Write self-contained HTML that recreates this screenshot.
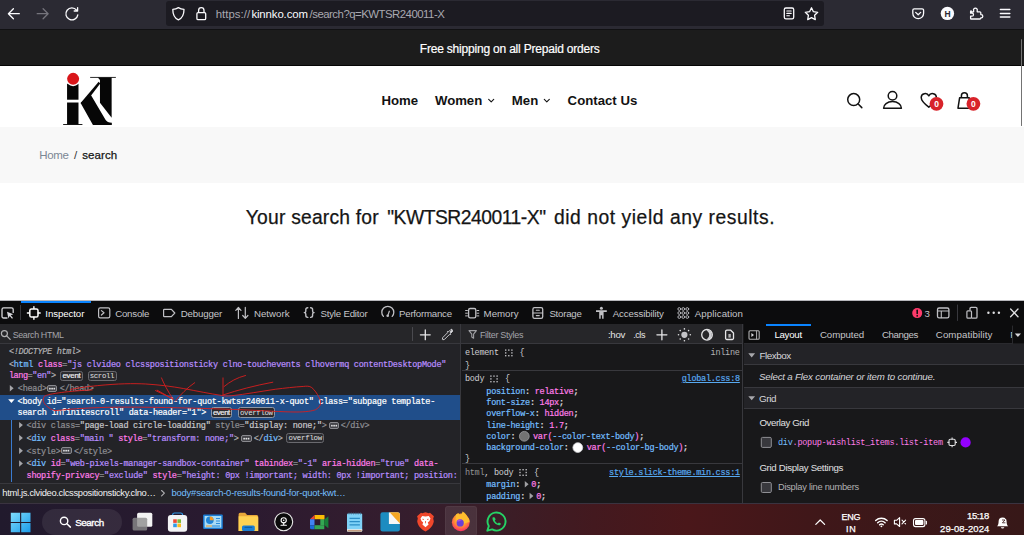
<!DOCTYPE html>
<html lang="en">
<head>
<meta charset="utf-8">
<title>kinnko search</title>
<style>
*{box-sizing:border-box;margin:0;padding:0}
html,body{width:1024px;height:535px;overflow:hidden;background:#fff}
body{position:relative;font-family:"Liberation Sans",sans-serif}
.a{position:absolute}
.t{position:absolute;white-space:nowrap;line-height:1}
svg{position:absolute;overflow:visible}
.eq{color:#8f8f94}.tag{color:#75bfff}.an{color:#ff7de9}.av{color:#b98eff}.pn{color:#75bfff}.pv{color:#ff7de9}.g{color:#939395}
</style>
</head>
<body>

<!-- ===== Browser toolbar ===== -->
<div class="a" style="left:0;top:0;width:1024px;height:29px;background:#2b2a33"></div>
<div class="a" style="left:166px;top:1px;width:658px;height:25px;background:#1c1b22;border-radius:3px"></div>
<svg style="left:0;top:0" width="1024" height="29" viewBox="0 0 1024 29" fill="none" stroke-linecap="round" stroke-linejoin="round">
<g stroke="#fbfbfe" stroke-width="1.3">
<path d="M19.3 13.7H8.6M13.4 8.7l-5 5 5 5"/>
<path d="M76.6 10.2a6 6 0 1 0 1.2 4.6M77.6 7.6v3.4h-3.4" />
</g>
<g stroke="#75747c" stroke-width="1.3"><path d="M37.2 13.7h10.7M43.1 8.7l5 5-5 5"/></g>
<!-- shield -->
<path d="M178.4 7.6c-1.8 1.2-3.6 1.7-5.6 1.8 0 5.2 1.6 8.6 5.6 10.4 4-1.8 5.6-5.2 5.6-10.4-2-.1-3.8-.6-5.6-1.8z" stroke="#fbfbfe" stroke-width="1.3"/>
<!-- lock -->
<rect x="196.9" y="12.6" width="8.8" height="7" rx="1.2" stroke="#fbfbfe" stroke-width="1.3"/>
<path d="M198.6 12.4v-2a2.7 2.7 0 0 1 5.4 0v2" stroke="#fbfbfe" stroke-width="1.3"/>
<!-- reader -->
<rect x="784.3" y="8" width="9.4" height="10.8" rx="1.6" stroke="#fbfbfe" stroke-width="1.3"/>
<path d="M786.8 11h4.4M786.8 13.4h4.4M786.8 15.8h2.6" stroke="#fbfbfe" stroke-width="1.1"/>
<!-- star -->
<path d="M811.5 7.8l1.9 3.9 4.3.6-3.1 3 .7 4.3-3.8-2-3.8 2 .7-4.3-3.1-3 4.3-.6z" stroke="#fbfbfe" stroke-width="1.3"/>
<!-- pocket -->
<path d="M914.2 8.9h8a1.4 1.4 0 0 1 1.4 1.4v3a5.4 5.4 0 0 1-10.8 0v-3a1.4 1.4 0 0 1 1.4-1.4z" stroke="#fbfbfe" stroke-width="1.3"/>
<path d="M915.7 12.4l2.5 2.4 2.5-2.4" stroke="#fbfbfe" stroke-width="1.3"/>
<!-- avatar -->
<circle cx="947.4" cy="13.4" r="6.7" fill="#fbfbfe" stroke="none"/>
<!-- extensions (puzzle) -->
<path d="M971.2 12.4h2.4v-1.2a1.9 1.9 0 1 1 3.6 0v1.2h2.6a1 1 0 0 1 1 1v1.8h.4a1.6 1.6 0 1 1 0 3.2h-.4v.2a1 1 0 0 1-1 1h-8.600a.6.6 0 0 1-.6-.6v-2.200h1.4a1.500 1.500 0 1 0 0-3h-1.400v-1.800a.6.6 0 0 1 .6-.6z" stroke="#fbfbfe" stroke-width="1.3" transform="translate(0,-0.6)"/>
<!-- hamburger -->
<path d="M1000.400 9.500h9.400M1000.400 13.400h9.400M1000.400 17h9.400" stroke="#fbfbfe" stroke-width="1.500"/>
</svg>
<div class="t" id="t0" style="left:215.70px;top:9.00px;font-size:11.4px;color:#a9a8b0;letter-spacing:0.042px;">https://<span class="t" id="t1" style="left:35.70px;top:0;color:#fbfbfe;letter-spacing:-0.114px;">kinnko.com</span><span class="t" id="t2" style="left:93.90px;top:0;color:#a9a8b0;letter-spacing:-0.507px;">/search?q=KWTSR240011-X</span></div>
<div class="t" id="t3" style="left:944.40px;top:10.01px;font-size:8.5px;color:#2b2a33;font-weight:bold;">H</div>
<!-- ===== Site ===== -->
<div class="a" style="left:0;top:29px;width:1024px;height:37px;background:#1c1c1c;border-top:1px solid #111113;border-bottom:1.400px solid #050505"></div>
<div class="t" id="t4" style="left:419.80px;top:43.00px;font-size:12px;color:#fff;letter-spacing:-0.199px;-webkit-text-stroke:0.2px;">Free shipping on all Prepaid orders</div>
<div class="a" style="left:0;top:66px;width:1024px;height:61px;background:#fff"></div>
<svg style="left:0;top:66px" width="1024" height="61" viewBox="0 66 1024 61">
<path d="M67.06 83.69 L78.49 83.69 L78.49 99.71 L67.06 99.71Z" fill="#060606"/>
<path d="M67.06 102.51 L78.49 102.51 L78.49 124.47 L67.06 124.47Z" fill="#060606"/>
<path d="M63.14 124.02 L82.41 124.02 L82.41 124.92 L63.14 124.92Z" fill="#060606"/>
<path d="M90.15 76.93 L115.85 76.93 L115.85 77.78 L90.15 77.78Z" fill="#060606"/>
<path d="M97.81 77.59 L111.64 77.59 L111.64 117.78 L99.96 102.82 L99.96 79.93Z" fill="#060606"/>
<path d="M98.65 81.79 L100.24 83.38 L91.08 95.44 L81.36 103.66 L80.62 103.10Z" fill="#060606"/>
<path d="M80.62 103.10 L90.90 95.07 L105.66 119.93 Q107.16 122.45 111.83 122.64 L111.83 124.88 L92.95 124.88 Z" fill="#060606"/>
<circle cx="73.11" cy="78.87" r="7.300" fill="#fff"/>
<circle cx="73.11" cy="78.87" r="6" fill="#d9161a"/>
</svg>
<div class="t" id="t5" style="left:381.50px;top:94.01px;font-size:13.2px;color:#121212;font-weight:bold;letter-spacing:-0.047px;">Home</div>
<div class="t" id="t6" style="left:435.00px;top:94.01px;font-size:13.2px;color:#121212;font-weight:bold;letter-spacing:-0.048px;">Women</div>
<div class="t" id="t7" style="left:511.80px;top:94.01px;font-size:13.2px;color:#121212;font-weight:bold;letter-spacing:0.062px;">Men</div>
<div class="t" id="t8" style="left:567.60px;top:94.01px;font-size:13.2px;color:#121212;font-weight:bold;letter-spacing:0.010px;">Contact Us</div>
<svg style="left:0;top:66px" width="1024" height="61" viewBox="0 66 1024 61" fill="none" stroke="#121212" stroke-linecap="round" stroke-linejoin="round">
<path d="M488.700 99.400l2.500 2.400 2.500-2.400M544.300 99.400l2.500 2.400 2.500-2.400" stroke-width="1.100"/>
<g stroke-width="1.500">
<circle cx="853.700" cy="99.600" r="6"/><path d="M858.200 104l3.600 3.600"/>
<circle cx="892.500" cy="95.800" r="4.300"/><path d="M883.600 108.200c0-3.600 3.600-6.600 8.900-6.600s8.900 3 8.900 6.600z"/>
<path d="M928.800 107.200c-4.800-3.600-7.600-6.400-7.600-9.600a4 4 0 0 1 7.600-1.800 4 4 0 0 1 7.600 1.800c0 3.200-2.800 6-7.600 9.600z"/>
<path d="M959.600 97.800h9.600l1.200 10.400h-12.400z M961.400 97.600v-1.800a3 3 0 0 1 6 0v1.800"/>
</g>
<circle cx="936.500" cy="103.800" r="6.900" fill="#d8232a" stroke="none"/>
<circle cx="973.400" cy="103.800" r="6.900" fill="#d8232a" stroke="none"/>
</svg>
<div class="t" id="t9" style="left:934.20px;top:100.01px;font-size:8.5px;color:#fff;font-weight:bold;">0</div>
<div class="t" id="t10" style="left:971.10px;top:100.01px;font-size:8.5px;color:#fff;font-weight:bold;">0</div>
<div class="a" style="left:0;top:127px;width:1024px;height:55.500px;background:#f8f8f8"></div>
<div class="t" id="t11" style="left:39.30px;top:150.00px;font-size:11.5px;color:#7b8794;letter-spacing:-0.329px;">Home</div>
<div class="t" id="t12" style="left:74.10px;top:150.00px;font-size:11.5px;color:#333;">/</div>
<div class="t" id="t13" style="left:82.30px;top:150.00px;font-size:11.5px;color:#161616;letter-spacing:0.054px;-webkit-text-stroke:0.25px #161616;">search</div>
<div class="a" style="left:0;top:182.500px;width:1024px;height:118px;background:#fff"></div>
<div class="t" id="t14" style="left:245.80px;top:208.00px;font-size:19.3px;color:#151515;letter-spacing:0.204px;-webkit-text-stroke:0.25px;">Your search for <span class="t" id="t15" style="left:141.40px;top:0;color:#151515;letter-spacing:-0.479px;-webkit-text-stroke:0.25px;">"KWTSR240011-X" </span><span class="t" id="t16" style="left:308.20px;top:0;color:#151515;letter-spacing:0.546px;-webkit-text-stroke:0.25px;">did not yield any results.</span></div>
<div class="a" style="left:1020.700px;top:39.400px;width:1.400px;height:86.800px;background:#737373;border-radius:1px"></div>
<!-- ===== DevTools ===== -->
<div class="a" style="left:0;top:300px;width:1024px;height:203px;background:#232327"></div>
<div class="a" style="left:0;top:300px;width:1024px;height:1px;background:#b8b8bc"></div>
<div class="a" style="left:0;top:301px;width:1024px;height:22.600px;background:#0c0c0d"></div>
<div class="a" style="left:21px;top:301px;width:70px;height:2px;background:#0a84ff"></div>
<div class="a" style="left:20px;top:305px;width:1px;height:15px;background:#38383d"></div>
<div class="a" style="left:0;top:324px;width:742px;height:20px;background:#262629;border-bottom:1px solid #38383d"></div>
<div class="a" style="left:461px;top:344px;width:281px;height:159px;background:#18181a"></div>
<div class="a" style="left:460px;top:324px;width:1.300px;height:179px;background:#38383d"></div>
<div class="a" style="left:742px;top:324px;width:282px;height:179px;background:#18181a"></div>
<div class="a" style="left:742px;top:324px;width:1.300px;height:179px;background:#38383d"></div>
<div class="a" style="left:743.500px;top:324px;width:281px;height:20px;background:#0c0c0d;border-bottom:1px solid #2a2a2e"></div>
<div class="a" style="left:765.500px;top:324px;width:45.500px;height:1.500px;background:#0a84ff"></div>
<div class="a" style="left:743.500px;top:344px;width:281px;height:20.500px;background:#232327;border-bottom:1px solid #38383d"></div>
<div class="a" style="left:743.500px;top:386.600px;width:281px;height:22.300px;background:#232327;border-top:1px solid #38383d;border-bottom:1px solid #38383d"></div>
<div class="t" id="t17" style="left:45.30px;top:309.00px;font-size:9.7px;color:#fff;letter-spacing:-0.095px;">Inspector</div>
<div class="t" id="t18" style="left:115.20px;top:309.00px;font-size:9.7px;color:#c6c6ca;letter-spacing:-0.224px;">Console</div>
<div class="t" id="t19" style="left:180.70px;top:309.00px;font-size:9.7px;color:#c6c6ca;letter-spacing:-0.152px;">Debugger</div>
<div class="t" id="t20" style="left:253.90px;top:309.00px;font-size:9.7px;color:#c6c6ca;letter-spacing:0.028px;">Network</div>
<div class="t" id="t21" style="left:320.50px;top:309.00px;font-size:9.7px;color:#c6c6ca;letter-spacing:-0.213px;">Style Editor</div>
<div class="t" id="t22" style="left:399.00px;top:309.00px;font-size:9.7px;color:#c6c6ca;letter-spacing:-0.237px;">Performance</div>
<div class="t" id="t23" style="left:483.60px;top:309.00px;font-size:9.7px;color:#c6c6ca;">Memory</div>
<div class="t" id="t24" style="left:549.40px;top:309.00px;font-size:9.7px;color:#c6c6ca;letter-spacing:-0.240px;">Storage</div>
<div class="t" id="t25" style="left:612.70px;top:309.00px;font-size:9.7px;color:#c6c6ca;letter-spacing:-0.130px;">Accessibility</div>
<div class="t" id="t26" style="left:694.80px;top:309.00px;font-size:9.7px;color:#c6c6ca;letter-spacing:0.079px;">Application</div>
<div class="t" id="t27" style="left:924.40px;top:309.00px;font-size:9.7px;color:#c6c6ca;">3</div>
<div class="t" id="t28" style="left:12.70px;top:331.00px;font-size:8.9px;color:#a4a4a9;letter-spacing:-0.345px;">Search HTML</div>
<div class="t" id="t29" style="left:479.90px;top:331.01px;font-size:9px;color:#a4a4a9;letter-spacing:-0.293px;">Filter Styles</div>
<div class="t" id="t30" style="left:607.90px;top:330.01px;font-size:9.7px;color:#e6e6e8;letter-spacing:-0.271px;">:hov</div>
<div class="t" id="t31" style="left:633.20px;top:331.01px;font-size:9px;color:#e6e6e8;letter-spacing:-0.433px;">.cls</div>
<div class="t" id="t32" style="left:774.40px;top:330.00px;font-size:9.7px;color:#fff;letter-spacing:-0.279px;">Layout</div>
<div class="t" id="t33" style="left:819.90px;top:330.00px;font-size:9.7px;color:#c6c6ca;letter-spacing:-0.058px;">Computed</div>
<div class="t" id="t34" style="left:882.00px;top:330.00px;font-size:9.7px;color:#c6c6ca;letter-spacing:-0.414px;">Changes</div>
<div class="t" id="t35" style="left:935.80px;top:330.00px;font-size:9.7px;color:#c6c6ca;letter-spacing:0.096px;">Compatibility</div>
<div class="t" id="t36" style="left:1010.20px;top:330.00px;font-size:9.7px;color:#c6c6ca;">F</div>
<div class="t" id="t37" style="left:759.40px;top:351.01px;font-size:9.9px;color:#d7d7db;letter-spacing:-0.446px;">Flexbox</div>
<div class="t" id="t38" style="left:758.90px;top:372.00px;font-size:9.7px;color:#d7d7db;font-style:italic;letter-spacing:-0.163px;">Select a Flex container or item to continue.</div>
<div class="t" id="t39" style="left:758.90px;top:394.01px;font-size:9.9px;color:#d7d7db;letter-spacing:-0.319px;">Grid</div>
<div class="t" id="t40" style="left:759.40px;top:418.00px;font-size:9.7px;color:#e0e0e2;letter-spacing:-0.407px;">Overlay Grid</div>
<div class="t" id="t41" style="left:759.40px;top:463.01px;font-size:9.7px;color:#e0e0e2;letter-spacing:-0.323px;">Grid Display Settings</div>
<div class="t" id="t42" style="left:778.00px;top:483.01px;font-size:9.3px;color:#b1b1b3;letter-spacing:-0.268px;">Display line numbers</div>
<div class="t" id="t43" style="left:778.00px;top:439.01px;font-size:8.5px;color:#fff;font-family:'Liberation Mono',monospace;letter-spacing:-0.256px;"><span class="tag">div</span><span class="an">.popup-wishlist_items.list-item</span></div>
<svg style="left:742px;top:344px" width="282" height="159" viewBox="742 344 282 159" fill="none">
<path d="M748.300 353.300h6.800l-3.400 4.100z M748.300 396.200h6.800l-3.400 4.100z" fill="#a8a8ac"/>
<rect x="761.300" y="437.400" width="10" height="10" rx="1.200" fill="#38383d" stroke="#8f8f94" stroke-width="1"/>
<rect x="761.300" y="482.500" width="10" height="10" rx="1.200" fill="#38383d" stroke="#8f8f94" stroke-width="1"/>
<circle cx="965.600" cy="442.400" r="5.100" fill="#9400ff"/>
<g stroke="#e0e0e2" stroke-width="1.100"><rect x="949" y="439.300" width="6.200" height="6.200" rx="1.200"/><path d="M952.100 437.500v2M952.100 445.300v2M947.300 442.400h2M955 442.400h2"/></g>
</svg>
<div class="a" style="left:0;top:395.300px;width:460px;height:24.300px;background:#204e8a"></div>
<div class="a" style="left:11px;top:419.500px;width:0.900px;height:62.500px;background:#3a7bd0"></div>
<div class="t" id="t44" style="left:8.90px;top:348.02px;font-size:8.5px;color:#b1b1b3;font-family:'Liberation Mono',monospace;font-style:italic;letter-spacing:-0.323px;-webkit-text-stroke:0.2px;">&lt;!DOCTYPE html&gt;</div>
<div class="t" id="t45" style="left:8.90px;top:361.02px;font-size:8.5px;color:#b1b1b3;font-family:'Liberation Mono',monospace;letter-spacing:-0.242px;-webkit-text-stroke:0.2px;">&lt;<span class="tag">html</span> <span class="an">class</span><span class="eq">=</span><span class="av">"js clvideo clcsspositionsticky clno-touchevents clhovermq contentDesktopMode"</span></div>
<div class="t" id="t46" style="left:8.90px;top:372.02px;font-size:8.5px;color:#b1b1b3;font-family:'Liberation Mono',monospace;letter-spacing:-0.426px;-webkit-text-stroke:0.2px;"><span class="an">lang</span><span class="eq">=</span><span class="av">"en"</span>&gt;</div>
<div class="t" id="t47" style="left:17.80px;top:385.02px;font-size:8.5px;color:#8f8f94;font-family:'Liberation Mono',monospace;letter-spacing:-0.260px;-webkit-text-stroke:0.2px;">&lt;head&gt;</div>
<div class="t" id="t48" style="left:59.80px;top:385.02px;font-size:8.5px;color:#8f8f94;font-family:'Liberation Mono',monospace;letter-spacing:-0.260px;-webkit-text-stroke:0.2px;">&lt;/head&gt;</div>
<div class="t" id="t49" style="left:17.60px;top:398.01px;font-size:8.5px;color:#fff;font-family:'Liberation Mono',monospace;letter-spacing:-0.247px;-webkit-text-stroke:0.2px;">&lt;body id="search-0-results-found-for-quot-kwtsr240011-x-quot" class="subpage template-</div>
<div class="t" id="t50" style="left:17.60px;top:409.02px;font-size:8.5px;color:#fff;font-family:'Liberation Mono',monospace;letter-spacing:-0.267px;-webkit-text-stroke:0.2px;">search infinitescroll" data-header="1"&gt;</div>
<div class="t" id="t51" style="left:26.60px;top:422.01px;font-size:8.5px;color:#8f8f94;font-family:'Liberation Mono',monospace;letter-spacing:-0.263px;-webkit-text-stroke:0.2px;"><span style="color:#8f8f94">&lt;div</span> <span style="color:#8f8f94">class</span><span class="eq">=</span><span style="color:#c8c8cc">"page-load circle-loadding"</span> <span style="color:#8f8f94">style</span><span class="eq">=</span><span style="color:#c8c8cc">"display: none;"</span><span style="color:#8f8f94">&gt;</span></div>
<div class="t" id="t52" style="left:340.70px;top:422.01px;font-size:8.5px;color:#8f8f94;font-family:'Liberation Mono',monospace;letter-spacing:-0.362px;-webkit-text-stroke:0.2px;">&lt;/div&gt;</div>
<div class="t" id="t53" style="left:26.60px;top:435.01px;font-size:8.5px;color:#b1b1b3;font-family:'Liberation Mono',monospace;letter-spacing:-0.285px;-webkit-text-stroke:0.2px;">&lt;<span class="tag">div</span> <span class="an">class</span><span class="eq">=</span><span class="av">"main "</span> <span class="an">style</span><span class="eq">=</span><span class="av">"transform: none;"</span>&gt;</div>
<div class="t" id="t54" style="left:253.80px;top:435.01px;font-size:8.5px;color:#b1b1b3;font-family:'Liberation Mono',monospace;letter-spacing:-0.305px;-webkit-text-stroke:0.2px;">&lt;/<span class="tag">div</span>&gt;</div>
<div class="t" id="t55" style="left:26.60px;top:448.01px;font-size:8.5px;color:#8f8f94;font-family:'Liberation Mono',monospace;letter-spacing:-0.260px;-webkit-text-stroke:0.2px;">&lt;style&gt;</div>
<div class="t" id="t56" style="left:73.90px;top:448.01px;font-size:8.5px;color:#8f8f94;font-family:'Liberation Mono',monospace;letter-spacing:-0.388px;-webkit-text-stroke:0.2px;">&lt;/style&gt;</div>
<div class="t" id="t57" style="left:26.60px;top:460.02px;font-size:8.5px;color:#b1b1b3;font-family:'Liberation Mono',monospace;letter-spacing:-0.258px;-webkit-text-stroke:0.2px;">&lt;<span class="tag">div</span> <span class="an">id</span><span class="eq">=</span><span class="av">"web-pixels-manager-sandbox-container"</span> <span class="an">tabindex</span><span class="eq">=</span><span class="av">"-1"</span> <span class="an">aria-hidden</span><span class="eq">=</span><span class="av">"true"</span> <span class="an">data-</span></div>
<div class="t" id="t58" style="left:26.60px;top:472.01px;font-size:8.5px;color:#b1b1b3;font-family:'Liberation Mono',monospace;letter-spacing:-0.259px;-webkit-text-stroke:0.2px;"><span class="an">shopify-privacy</span><span class="eq">=</span><span class="av">"exclude"</span> <span class="an">style</span><span class="eq">=</span><span class="av">"height: 0px !important; width: 0px !important; position:</span></div>
<div class="a" style="left:60.2px;top:370.6px;width:22.5px;height:10.200px;border:1px solid #6a6a6f;border-radius:2.500px;background:#2c2c30"></div>
<div class="t" id="t59" style="left:62.40px;top:372.01px;font-size:7.8px;color:#f0f0f2;letter-spacing:-0.195px;-webkit-text-stroke:0.2px;">event</div>
<div class="a" style="left:87.5px;top:370.6px;width:29.4px;height:10.200px;border:1px solid #6a6a6f;border-radius:2.500px;background:#2c2c30"></div>
<div class="t" id="t60" style="left:89.80px;top:373.01px;font-size:7.4px;color:#e0e0e2;font-family:'Liberation Mono',monospace;letter-spacing:-0.405px;">scroll</div>
<div class="a" style="left:210.7px;top:407.4px;width:21.5px;height:10.200px;border:1px solid #8d97a6;border-radius:2.500px;background:#2b2b30"></div>
<div class="t" id="t61" style="left:212.90px;top:409.00px;font-size:7.8px;color:#f0f0f2;letter-spacing:-0.445px;-webkit-text-stroke:0.2px;">event</div>
<div class="a" style="left:237.7px;top:407.4px;width:37.1px;height:10.200px;border:1px solid #8d97a6;border-radius:2.500px;background:#2b2b30"></div>
<div class="t" id="t62" style="left:240.00px;top:410.01px;font-size:7.4px;color:#e0e0e2;font-family:'Liberation Mono',monospace;letter-spacing:-0.355px;">overflow</div>
<div class="a" style="left:286.2px;top:433.0px;width:38.2px;height:10.200px;border:1px solid #6a6a6f;border-radius:2.500px;background:#2c2c30"></div>
<div class="t" id="t63" style="left:288.50px;top:435.00px;font-size:7.4px;color:#e0e0e2;font-family:'Liberation Mono',monospace;letter-spacing:-0.255px;">overflow</div>
<div class="a" style="left:47.2px;top:384.9px;width:10.2px;height:7.200px;border:1px solid #8a8a8f;border-radius:2px;background:#45454a"></div>
<svg style="left:47.2px;top:384.9px" width="10.2" height="7.200" viewBox="0 0 10.2 7.200"><circle cx="2.90" cy="3.700" r="0.900" fill="#e0e0e2"/><circle cx="5.10" cy="3.700" r="0.900" fill="#e0e0e2"/><circle cx="7.30" cy="3.700" r="0.900" fill="#e0e0e2"/></svg>
<div class="a" style="left:329px;top:421.7px;width:10.2px;height:7.200px;border:1px solid #8a8a8f;border-radius:2px;background:#45454a"></div>
<svg style="left:329px;top:421.7px" width="10.2" height="7.200" viewBox="0 0 10.2 7.200"><circle cx="2.90" cy="3.700" r="0.900" fill="#e0e0e2"/><circle cx="5.10" cy="3.700" r="0.900" fill="#e0e0e2"/><circle cx="7.30" cy="3.700" r="0.900" fill="#e0e0e2"/></svg>
<div class="a" style="left:241px;top:434.5px;width:10.7px;height:7.200px;border:1px solid #8a8a8f;border-radius:2px;background:#45454a"></div>
<svg style="left:241px;top:434.5px" width="10.7" height="7.200" viewBox="0 0 10.7 7.200"><circle cx="3.15" cy="3.700" r="0.900" fill="#e0e0e2"/><circle cx="5.35" cy="3.700" r="0.900" fill="#e0e0e2"/><circle cx="7.55" cy="3.700" r="0.900" fill="#e0e0e2"/></svg>
<div class="a" style="left:61.4px;top:447.3px;width:10.3px;height:7.200px;border:1px solid #8a8a8f;border-radius:2px;background:#45454a"></div>
<svg style="left:61.4px;top:447.3px" width="10.3" height="7.200" viewBox="0 0 10.3 7.200"><circle cx="2.95" cy="3.700" r="0.900" fill="#e0e0e2"/><circle cx="5.15" cy="3.700" r="0.900" fill="#e0e0e2"/><circle cx="7.35" cy="3.700" r="0.900" fill="#e0e0e2"/></svg>
<svg style="left:0;top:344px" width="460" height="140" viewBox="0 344 460 140"><path d="M9.8 385.1v6.400l3.800-3.200z" fill="#a6a6aa"/><path d="M8.2 399.3h6.400l-3.200 3.800z" fill="#fff"/><path d="M19.1 421.9v6.400l3.800-3.200z" fill="#a6a6aa"/><path d="M19.1 434.7v6.400l3.800-3.200z" fill="#a6a6aa"/><path d="M19.1 447.5v6.400l3.800-3.200z" fill="#a6a6aa"/><path d="M19.1 460.3v6.400l3.800-3.200z" fill="#a6a6aa"/>
<!-- hand-drawn annotation -->
<g fill="none" stroke="#d81e1e" stroke-width="0.900" stroke-linecap="round" stroke-linejoin="round">
<path d="M92.200 389.900C70 391 48 393.500 44.100 396.500c-1.500 3.500-.500 6.500 1.500 8.500 3 3 6.500 5 9.500 5.700 30 -3.500 60 -3.700 85 -3.500 35 .3 65 1.200 98 2.400 25 1 45 2.400 58 2.400 10 0 16-1 19.500-2.300 3.500-2 5-4.500 5-6.500 0-3-1.200-5.500-2-6.500-1.500-3-4-6.800-6.800-9.100-2.500-1.800-5.500-1.500-8-1.200-10 .6-19 1.700-28 2.800-14 2-30 5-44 6.500-5 .500-8 .300-10-.200-13-2-24-4.300-38-6.900-12-2.200-24-3.700-38-4.600-12-.700-28 -.400-48 1.600-12 1.200-22 2.600-27 3.800"/>
<path d="M161.500 377.900c2 5 6 13 11.700 21.400M155.600 390.600l16.600 7.800M157.200 390.200l15.500 8.800M175.200 401.300c5-6.500 12-13.500 19.500-18.600"/>
<path d="M223 377.900v17.500M224 386.600c6-5 13-9 21.500-11.100M223 395c15-5 32-9.500 49.800-12.800"/>
</g></svg>
<div class="a" style="left:0;top:483.300px;width:460px;height:19.700px;background:#262629;border-top:1px solid #38383d"></div>
<div class="t" id="t64" style="left:2.30px;top:488.01px;font-size:9.4px;color:#f0f0f2;letter-spacing:-0.324px;">html.js.clvideo.clcsspositionsticky.clno…</div>
<div class="t" id="t65" style="left:171.50px;top:488.01px;font-size:9.4px;color:#75bfff;letter-spacing:-0.183px;">body#search-0-results-found-for-quot-kwt…</div>
<svg style="left:158px;top:486px" width="10" height="14" viewBox="158 486 10 14"><path d="M161.600 490.500l2.800 2.700-2.800 2.700" fill="none" stroke="#b1b1b3" stroke-width="1.100" stroke-linecap="round" stroke-linejoin="round"/></svg>
<div class="t" id="t66" style="left:464.90px;top:349.02px;font-size:8.5px;color:#cfcfd3;font-family:'Liberation Mono',monospace;letter-spacing:-0.260px;">element</div>
<div class="t" id="t67" style="left:519.60px;top:349.02px;font-size:8.5px;color:#cfcfd3;font-family:'Liberation Mono',monospace;letter-spacing:-0.260px;">{</div>
<div class="t" id="t68" style="right:284.40px;top:349.02px;font-size:8.5px;color:#b1b1b3;font-family:'Liberation Mono',monospace;letter-spacing:-0.260px;">inline</div>
<div class="t" id="t69" style="left:464.90px;top:362.01px;font-size:8.5px;color:#cfcfd3;font-family:'Liberation Mono',monospace;letter-spacing:-0.260px;">}</div>
<div class="a" style="left:461.500px;top:370px;width:280.500px;height:1px;background:#38383d"></div>
<div class="t" id="t70" style="left:464.90px;top:375.01px;font-size:8.5px;color:#cfcfd3;font-family:'Liberation Mono',monospace;letter-spacing:-0.260px;">body</div>
<div class="t" id="t71" style="left:505.00px;top:375.01px;font-size:8.5px;color:#cfcfd3;font-family:'Liberation Mono',monospace;letter-spacing:-0.260px;">{</div>
<div class="t" id="t72" style="right:284.20px;top:375.01px;font-size:8.5px;color:#58a9f0;font-family:'Liberation Mono',monospace;letter-spacing:-0.260px;text-decoration:underline;-webkit-text-stroke:0.2px;">global.css:8</div>
<div class="t" id="t73" style="left:486.30px;top:388.02px;font-size:8.5px;color:#e4e4e6;font-family:'Liberation Mono',monospace;letter-spacing:-0.260px;-webkit-text-stroke:0.2px;"><span class="pn">position</span>: <span class="pv">relative</span>;</div>
<div class="t" id="t74" style="left:486.30px;top:399.01px;font-size:8.5px;color:#e4e4e6;font-family:'Liberation Mono',monospace;letter-spacing:-0.260px;-webkit-text-stroke:0.2px;"><span class="pn">font-size</span>: <span class="pv">14px</span>;</div>
<div class="t" id="t75" style="left:486.30px;top:410.01px;font-size:8.5px;color:#e4e4e6;font-family:'Liberation Mono',monospace;letter-spacing:-0.260px;-webkit-text-stroke:0.2px;"><span class="pn">overflow-x</span>: <span class="pv">hidden</span>;</div>
<div class="t" id="t76" style="left:486.30px;top:422.02px;font-size:8.5px;color:#e4e4e6;font-family:'Liberation Mono',monospace;letter-spacing:-0.260px;-webkit-text-stroke:0.2px;"><span class="pn">line-height</span>: <span class="pv">1.7</span>;</div>
<div class="t" id="t77" style="left:486.30px;top:433.01px;font-size:8.5px;color:#e4e4e6;font-family:'Liberation Mono',monospace;letter-spacing:-0.260px;-webkit-text-stroke:0.2px;"><span class="pn">color</span>:</div>
<div class="t" id="t78" style="left:533.00px;top:433.01px;font-size:8.5px;color:#e4e4e6;font-family:'Liberation Mono',monospace;letter-spacing:-0.275px;-webkit-text-stroke:0.2px;"><span class="pv">var(</span><span class="pn">--color-text-body</span><span class="pv">)</span>;</div>
<div class="t" id="t79" style="left:486.30px;top:444.01px;font-size:8.5px;color:#e4e4e6;font-family:'Liberation Mono',monospace;letter-spacing:-0.260px;-webkit-text-stroke:0.2px;"><span class="pn">background-color</span>:</div>
<div class="t" id="t80" style="left:586.80px;top:444.01px;font-size:8.5px;color:#e4e4e6;font-family:'Liberation Mono',monospace;letter-spacing:-0.287px;-webkit-text-stroke:0.2px;"><span class="pv">var(</span><span class="pn">--color-bg-body</span><span class="pv">)</span>;</div>
<div class="t" id="t81" style="left:464.90px;top:455.01px;font-size:8.5px;color:#cfcfd3;font-family:'Liberation Mono',monospace;letter-spacing:-0.260px;">}</div>
<div class="a" style="left:461.500px;top:463px;width:280.500px;height:1px;background:#38383d"></div>
<div class="t" id="t82" style="left:464.90px;top:469.01px;font-size:8.5px;color:#cfcfd3;font-family:'Liberation Mono',monospace;letter-spacing:-0.260px;"><span class="g">html</span>, body</div>
<div class="t" id="t83" style="left:534.00px;top:469.01px;font-size:8.5px;color:#cfcfd3;font-family:'Liberation Mono',monospace;letter-spacing:-0.260px;">{</div>
<div class="t" id="t84" style="right:284.20px;top:469.01px;font-size:8.5px;color:#58a9f0;font-family:'Liberation Mono',monospace;letter-spacing:-0.260px;text-decoration:underline;-webkit-text-stroke:0.2px;">style.slick-theme.min.css:1</div>
<div class="t" id="t85" style="left:486.30px;top:481.02px;font-size:8.5px;color:#e4e4e6;font-family:'Liberation Mono',monospace;letter-spacing:-0.260px;-webkit-text-stroke:0.2px;"><span class="pn">margin</span>:</div>
<div class="t" id="t86" style="left:531.30px;top:481.02px;font-size:8.5px;color:#e4e4e6;font-family:'Liberation Mono',monospace;letter-spacing:-0.260px;-webkit-text-stroke:0.2px;"><span class="pv">0</span>;</div>
<div class="t" id="t87" style="left:486.30px;top:493.01px;font-size:8.5px;color:#e4e4e6;font-family:'Liberation Mono',monospace;letter-spacing:-0.260px;-webkit-text-stroke:0.2px;"><span class="pn">padding</span>:</div>
<div class="t" id="t88" style="left:536.20px;top:493.01px;font-size:8.5px;color:#e4e4e6;font-family:'Liberation Mono',monospace;letter-spacing:-0.260px;-webkit-text-stroke:0.2px;"><span class="pv">0</span>;</div>
<svg style="left:461px;top:344px" width="281" height="159" viewBox="461 344 281 159" fill="none"><rect x="505.0" y="349.4" width="1.400" height="1.400" fill="#b8b8bc"/><rect x="505.0" y="352.2" width="1.400" height="1.400" fill="#b8b8bc"/><rect x="505.0" y="355.0" width="1.400" height="1.400" fill="#b8b8bc"/><rect x="508.1" y="349.4" width="1.400" height="1.400" fill="#b8b8bc"/><rect x="508.1" y="355.0" width="1.400" height="1.400" fill="#b8b8bc"/><rect x="511.2" y="349.4" width="1.400" height="1.400" fill="#b8b8bc"/><rect x="511.2" y="352.2" width="1.400" height="1.400" fill="#b8b8bc"/><rect x="511.2" y="355.0" width="1.400" height="1.400" fill="#b8b8bc"/><rect x="490.2" y="375.4" width="1.400" height="1.400" fill="#b8b8bc"/><rect x="490.2" y="378.2" width="1.400" height="1.400" fill="#b8b8bc"/><rect x="490.2" y="381.0" width="1.400" height="1.400" fill="#b8b8bc"/><rect x="493.3" y="375.4" width="1.400" height="1.400" fill="#b8b8bc"/><rect x="493.3" y="381.0" width="1.400" height="1.400" fill="#b8b8bc"/><rect x="496.4" y="375.4" width="1.400" height="1.400" fill="#b8b8bc"/><rect x="496.4" y="378.2" width="1.400" height="1.400" fill="#b8b8bc"/><rect x="496.4" y="381.0" width="1.400" height="1.400" fill="#b8b8bc"/><rect x="519.3" y="469.0" width="1.400" height="1.400" fill="#b8b8bc"/><rect x="519.3" y="471.8" width="1.400" height="1.400" fill="#b8b8bc"/><rect x="519.3" y="474.6" width="1.400" height="1.400" fill="#b8b8bc"/><rect x="522.4" y="469.0" width="1.400" height="1.400" fill="#b8b8bc"/><rect x="522.4" y="474.6" width="1.400" height="1.400" fill="#b8b8bc"/><rect x="525.5" y="469.0" width="1.400" height="1.400" fill="#b8b8bc"/><rect x="525.5" y="471.8" width="1.400" height="1.400" fill="#b8b8bc"/><rect x="525.5" y="474.6" width="1.400" height="1.400" fill="#b8b8bc"/>
<circle cx="524.300" cy="436.300" r="4.900" fill="#737373" stroke="#9a9a9e" stroke-width="0.800"/>
<circle cx="577.800" cy="447.600" r="4.900" fill="#ffffff" stroke="#d0d0d4" stroke-width="0.800"/>
<path d="M524.800 481v6.400l3.800-3.200z M529.600 492.800v6.400l3.800-3.200z" fill="#a0a0a4"/>
</svg>
<svg style="left:0;top:300px" width="1024" height="45" viewBox="0 300 1024 45" fill="none" stroke-linecap="round" stroke-linejoin="round">
<!-- picker -->
<path d="M7 318h-3.400a1.600 1.600 0 0 1-1.600-1.600v-7a1.600 1.600 0 0 1 1.600-1.600h8a1.600 1.600 0 0 1 1.600 1.600v3" stroke="#d7d7db" stroke-width="1.300"/>
<path d="M7 311.700l6.300 2.500-2.600 1.100 2.300 2.600-1 .9-2.300-2.700-1.300 2.300z" fill="#d7d7db"/>
<!-- inspector -->
<rect x="29.800" y="308.900" width="8.200" height="8.200" rx="1.600" stroke="#fff" stroke-width="1.500"/>
<path d="M33.900 306.600v2M33.900 317.300v2M27.400 313h2M38.200 313h2" stroke="#fff" stroke-width="1.400"/>
<g stroke="#c0c0c4" stroke-width="1.200">
<!-- console -->
<rect x="98.600" y="307.800" width="11.200" height="10" rx="1.600"/><path d="M101.400 310.600l2.600 2.200-2.600 2.200"/>
<!-- debugger -->
<path d="M164.400 309.300h7l3.400 3.700-3.400 3.700h-7a.8.800 0 0 1-.8-.8v-5.800a.8.800 0 0 1 .8-.8z"/>
<!-- network -->
<path d="M238.400 318.400v-10.800M235.800 310.300l2.600-2.800 2.600 2.800M245.300 307.400v10.800M242.700 315.500l2.600 2.800 2.600-2.800"/>
<!-- style editor braces -->
<path d="M307.800 307.800c-1.600 0-2 .7-2 1.800v1.600c0 .9-.6 1.400-1.500 1.400.9 0 1.500.5 1.500 1.400v1.600c0 1.100.4 1.800 2 1.800M310.600 307.800c1.600 0 2 .7 2 1.800v1.600c0 .9.600 1.400 1.500 1.400-.9 0-1.500.5-1.500 1.400v1.600c0 1.100-.4 1.800-2 1.800" stroke-width="1.400"/>
<!-- performance -->
<path d="M383.400 316.400a6 6 0 1 1 8.800 0" stroke-width="1.300"/><path d="M389.300 311.200l-1.500 4.400" stroke-width="1.200"/>
<!-- memory -->
<rect x="468.600" y="308.500" width="7.200" height="9.400" rx="1.600" stroke-width="1.300"/>
<path d="M465.600 310.500h1.800M465.600 313.200h1.800M465.600 315.900h1.800M477 310.500h1.800M477 313.200h1.800M477 315.900h1.800" stroke-width="1"/>
<!-- storage -->
<rect x="532.900" y="307.600" width="9.800" height="10.800" rx="1.600" stroke-width="1.300"/>
<path d="M533 313h9.600M536.300 310.300h3M536.300 315.600h3" stroke-width="1.100"/>
<!-- application -->
<g stroke-width="0.900">
<circle cx="679.300" cy="309" r="1.400"/><circle cx="683.300" cy="309" r="1.400"/><circle cx="687.300" cy="309" r="1.400"/>
<circle cx="679.300" cy="313" r="1.400"/><circle cx="683.300" cy="313" r="1.400"/><circle cx="687.300" cy="313" r="1.400"/>
<circle cx="679.300" cy="317" r="1.400"/><circle cx="683.300" cy="317" r="1.400"/><circle cx="687.300" cy="317" r="1.400"/>
</g>
<!-- dock -->
<rect x="937.500" y="308" width="11.400" height="9.800" rx="1.600" stroke-width="1.300"/><path d="M937.800 311h10.800M941.300 311.200v6.400" stroke-width="1.100"/>
<!-- responsive -->
<path d="M970 309.800v-1.200a1.200 1.200 0 0 1 1.200-1.200h4.600a1.200 1.200 0 0 1 1.200 1.200v8.400a1.200 1.200 0 0 1-1.200 1.200h-3.600" stroke-width="1.300"/>
<rect x="966.900" y="310.800" width="4.600" height="7.400" rx="1" stroke-width="1.200"/>
<!-- close -->
<path d="M1010.600 309l7.400 7.800M1018 309l-7.400 7.800" stroke="#e0e0e2" stroke-width="1.300"/>
</g>
<!-- performance needle dot -->
<circle cx="387.700" cy="315.800" r="1.300" fill="#c0c0c4"/>
<!-- accessibility -->
<circle cx="601.400" cy="308.200" r="1.500" fill="#c0c0c4"/>
<path d="M596 310.300h10.800v1.700h-3.200v6.800h-1.500v-3.600h-1.400v3.600h-1.500v-6.800h-3.200z" fill="#c0c0c4"/>
<!-- dots -->
<circle cx="988.400" cy="312.700" r="1.200" fill="#e0e0e2"/><circle cx="993.700" cy="312.700" r="1.200" fill="#e0e0e2"/><circle cx="998.900" cy="312.700" r="1.200" fill="#e0e0e2"/>
<!-- error badge -->
<circle cx="917.200" cy="313.100" r="5" fill="#ff3b6b"/>
<path d="M917.200 310.200v3.400" stroke="#0c0c0d" stroke-width="1.500" stroke-linecap="round"/><circle cx="917.200" cy="315.800" r="0.900" fill="#0c0c0d"/>
<!-- separators -->
<path d="M957.500 305v15.500" stroke="#38383d" stroke-width="1"/>
<path d="M412.500 327.500v13" stroke="#4a4a4f" stroke-width="1"/>

<!-- row 2 -->
<circle cx="4.400" cy="333.600" r="3" stroke="#b1b1b3" stroke-width="1.200"/><path d="M6.700 335.900l3.500 3.500" stroke="#b1b1b3" stroke-width="1.300" stroke-linecap="round"/>
<path d="M420.400 334.800h9.800M425.300 329.900v9.800" stroke="#e6e6e8" stroke-width="1.300"/>
<!-- eyedropper -->
<path d="M451.800 329.500a1.600 1.600 0 0 1 .4 2.200l-1.800 1.800.6.600-1 1-.6-.6-4.800 4.800-1.700.5-.6-.6.500-1.700 4.800-4.800-.6-.6 1-1 .6.600 1.800-1.800a1.600 1.600 0 0 1 1.400-.400z" stroke="#d7d7db" stroke-width="0.900" />
<path d="M449.500 332l2.300-2.300 1.300 1.300-2.300 2.300z" fill="#d7d7db"/>
<!-- filter -->
<path d="M469 330.600h7.400l-2.800 3.600v4l-1.800-1.200v-2.800z" stroke="#a0a0a4" stroke-width="1.100" stroke-linejoin="round"/>
<path d="M656.900 334.800h10M661.900 329.800v10" stroke="#e6e6e8" stroke-width="1.300"/>
<!-- sun -->
<circle cx="684.400" cy="334.800" r="3.100" fill="#c4c4c8"/>
<g fill="#e0e0e2"><circle cx="684.400" cy="328.900" r="0.800"/><circle cx="684.400" cy="340.700" r="0.800"/><circle cx="678.500" cy="334.800" r="0.800"/><circle cx="690.300" cy="334.800" r="0.800"/>
<circle cx="680.200" cy="330.600" r="0.800"/><circle cx="688.600" cy="330.600" r="0.800"/><circle cx="680.200" cy="339" r="0.800"/><circle cx="688.600" cy="339" r="0.800"/></g>
<!-- moon -->
<circle cx="707" cy="334.800" r="5.300" stroke="#e6e6e8" stroke-width="1.300"/>
<path d="M707.600 330.400a4.500 4.500 0 0 1 0 8.800 5.400 5.400 0 0 0 0-8.800z" fill="#d0d0d4" stroke="#d0d0d4" stroke-width="1.200"/>
<!-- doc -->
<path d="M726.900 330.200h3.800l2.800 2.800v5.200a1.300 1.300 0 0 1-1.300 1.300h-5.300a1.300 1.300 0 0 1-1.300-1.300v-6.700a1.300 1.300 0 0 1 1.300-1.300z" stroke="#e6e6e8" stroke-width="1.300"/>
<path d="M728.400 334h2.400v3.600h-2.400z" fill="#b1b1b3"/>
<!-- sidebar toggle -->
<rect x="749" y="330.800" width="10.200" height="8.400" rx="1" stroke="#b1b1b3" stroke-width="1.100"/><path d="M756.600 331v8" stroke="#b1b1b3" stroke-width="1"/><path d="M751.400 333l2.600 2-2.600 2z" fill="#d7d7db"/>
<!-- dropdown arrow -->
<rect x="1012.500" y="325" width="11.500" height="18.500" fill="#0c0c0d"/><path d="M1014.800 333.400h6.200l-3.100 3.600z" fill="#d7d7db"/>
<path d="M1012.500 326v18" stroke="#2a2a2e" stroke-width="1"/>
</svg>
<!-- ===== Taskbar ===== -->
<div class="a" style="left:0;top:503px;width:1024px;height:32px;background:linear-gradient(90deg,#211a2d 0%,#2a1a30 22%,#341d2e 38%,#3a1e28 48%,#43191f 58%,#4a171a 67%,#3f1719 80%,#371818 100%);border-top:1px solid #3a3340"></div>
<div class="a" style="left:42px;top:509px;width:80px;height:26px;border-radius:13px;background:rgba(255,255,255,0.075)"></div>
<div class="a" style="left:445px;top:505.700px;width:32px;height:30px;border-radius:3px;background:rgba(255,255,255,0.09);border:1px solid rgba(255,255,255,0.04)"></div>
<div class="t" id="t89" style="left:75.20px;top:518.02px;font-size:9.8px;color:#fff;letter-spacing:-0.429px;-webkit-text-stroke:0.35px;">Search</div>
<div class="t" id="t90" style="left:841.40px;top:513.01px;font-size:9px;color:#fff;letter-spacing:-0.258px;-webkit-text-stroke:0.25px;">ENG</div>
<div class="t" id="t91" style="left:846.00px;top:525.01px;font-size:9px;color:#fff;letter-spacing:0.800px;-webkit-text-stroke:0.25px;">IN</div>
<div class="t" id="t92" style="left:967.10px;top:511.00px;font-size:9.5px;color:#fff;letter-spacing:-0.395px;-webkit-text-stroke:0.25px;">15:18</div>
<div class="t" id="t93" style="left:940.10px;top:524.01px;font-size:9.5px;color:#fff;letter-spacing:0.066px;-webkit-text-stroke:0.25px;">29-08-2024</div>
<svg style="left:0;top:503px" width="1024" height="32" viewBox="0 503 1024 32" fill="none">
<defs>
<linearGradient id="wg" x1="0" y1="0" x2="1" y2="1"><stop offset="0" stop-color="#7fdcfc"/><stop offset="1" stop-color="#1a9bea"/></linearGradient>
<radialGradient id="ff" cx="0.5" cy="0.35" r="0.75"><stop offset="0" stop-color="#ffe14d"/><stop offset="0.45" stop-color="#ff9a2e"/><stop offset="0.8" stop-color="#ff3d5a"/><stop offset="1" stop-color="#e31587"/></radialGradient>
</defs>
<!-- windows -->
<path d="M10.800 512.700h9.300v9.300h-9.300zM21.200 512.700h9.300v9.300h-9.300zM10.800 523h9.300v9.300h-9.300zM21.200 523h9.300v9.300h-9.300z" fill="url(#wg)"/>
<!-- search magnifier -->
<circle cx="64.100" cy="520.900" r="3.700" stroke="#fff" stroke-width="1.400"/><path d="M66.900 523.800l3.500 3.300" stroke="#fff" stroke-width="1.500" stroke-linecap="round"/>
<!-- task view -->
<rect x="137.100" y="512.700" width="15.200" height="14" rx="1.500" fill="#f3f3f3"/>
<rect x="132.600" y="517.800" width="14.600" height="12.700" rx="1.500" fill="#8c8c8c" fill-opacity="0.800"/>
<!-- store -->
<path d="M172.600 516v-1a2 2 0 0 1 2-2h6a2 2 0 0 1 2 2v1" stroke="#2f9ae8" stroke-width="1.200"/>
<rect x="167.900" y="515" width="19.300" height="16.700" rx="3" fill="#f4f4f6"/>
<rect x="173.200" y="519.300" width="3.600" height="3.600" fill="#f04a37"/><rect x="177.400" y="519.300" width="3.600" height="3.600" fill="#7cba3a"/>
<rect x="173.200" y="523.600" width="3.600" height="3.600" fill="#2f9ae8"/><rect x="177.400" y="523.600" width="3.600" height="3.600" fill="#fbbc1c"/>
<!-- control panel -->
<rect x="203.100" y="514.600" width="19.700" height="14.400" rx="1" fill="#1c7ed6"/>
<rect x="204.600" y="516" width="16.700" height="11.600" fill="#a9dcf6"/>
<circle cx="209.800" cy="520.300" r="3.800" fill="#1f84d8"/><path d="M209.800 520.300v-3.800a3.800 3.800 0 0 1 3.800 3.800z" fill="#f59a23"/>
<path d="M206 526h6" stroke="#f59a23" stroke-width="1"/><path d="M212 526h8" stroke="#1f84d8" stroke-width="1"/>
<path d="M216 518.500h4M216 521h4M216 523.500h4" stroke="#1f84d8" stroke-width="0.900"/>
<!-- folder -->
<path d="M238.600 514.200a1.500 1.500 0 0 1 1.500-1.500h5l2 2.200h9.600a1.500 1.500 0 0 1 1.500 1.500v14.700h-19.600z" fill="#e9a83a"/>
<path d="M238.600 516.200h18.100a1.500 1.500 0 0 1 1.500 1.500v13.400h-19.600z" fill="#ffd252"/>
<rect x="242" y="525.400" width="12.800" height="5.700" rx="1.500" fill="#1b7fd4"/>
<rect x="244.500" y="526.700" width="7.800" height="1.300" rx="0.600" fill="#0f5ea6"/>
<!-- webcam app -->
<circle cx="283.700" cy="521.800" r="9" fill="#0b0b0b" stroke="#e8e8e8" stroke-width="1.100"/>
<circle cx="283.700" cy="520.300" r="2.600" stroke="#fff" stroke-width="1.100"/><circle cx="283.700" cy="520.300" r="0.800" fill="#fff"/>
<path d="M283.700 523v1.800M281 525.300h5.400" stroke="#fff" stroke-width="1.100" stroke-linecap="round"/>
<!-- google meet -->
<path d="M314.500 515h9.800v4.200h-9.800z" fill="#fbbc05"/>
<path d="M310 519.200l4.500-4.200v4.200z" fill="#ea4335"/>
<path d="M310 519.200h4.500v6h-4.500z" fill="#4285f4"/>
<path d="M310 525.200h4.500v4h-3a1.500 1.500 0 0 1-1.500-1.500z" fill="#1a6dd9"/>
<path d="M314.500 525.200h9.800v4h-9.800z" fill="#34a853"/>
<path d="M320.300 519.200h4v6h-4z" fill="#34a853"/>
<path d="M324.300 519.500l4.100-3.300v12l-4.100-3.300z" fill="#188038"/>
<path d="M320.300 519.200l4-4.200v4.200z" fill="#fbbc05"/>
<!-- notepad -->
<rect x="347" y="513.400" width="15.200" height="18.300" rx="1.200" fill="#7fd2f7"/>
<path d="M347 529.200h15.200v1.300a1.200 1.200 0 0 1-1.200 1.200h-12.800a1.200 1.200 0 0 1-1.200-1.200z" fill="#f3ece4"/>
<path d="M347.600 530.900h14" stroke="#9a5a2c" stroke-width="0.900"/>
<path d="M349.500 518.400h10.400M349.500 521.600h10.400M349.500 524.800h10.400" stroke="#2b8ec6" stroke-width="1.300"/>
<path d="M349 512.600v1.800M351.300 512.600v1.800M353.600 512.600v1.800M355.900 512.600v1.800M358.200 512.600v1.800M360.500 512.600v1.800" stroke="#3d6d8c" stroke-width="0.900"/>
<!-- blue note app -->
<rect x="380.400" y="512.300" width="19.500" height="19.200" rx="2.200" fill="#1d8cc0"/>
<path d="M388.900 512.600h8.800a2.200 2.200 0 0 1 2.200 2.200v9.300h-11z" fill="#f6f6f6"/>
<path d="M389.600 512.300h8.100a2.200 2.200 0 0 1 2.200 2.200v9z" fill="#f5a623"/>
<!-- brave -->
<path d="M425.500 512.300l3.200 1 1.300-.6 3.900 3.600-.7 2.200.6 2.800c-.6 4.200-3.400 8-8.300 10.200-4.900-2.200-7.700-6-8.300-10.200l.6-2.800-.7-2.200 3.900-3.600 1.300.6z" fill="#f1472b"/>
<path d="M425.500 516.600l3.300-.6 1.700 2.400-1 2.700-1.700 1.500.8 1.900-3.100 2.700-3.100-2.700.8-1.900-1.700-1.500-1-2.700 1.700-2.400z" fill="#fff"/>
<path d="M424 519.500l-1.600-.3M427 519.500l1.600-.3M425.500 521v2.300" stroke="#f1472b" stroke-width="0.800"/>
<!-- firefox -->
<circle cx="460.800" cy="522.300" r="8.900" fill="url(#ff)"/>
<path d="M455.500 515.500c.8-1.600 2.200-2.300 3.300-2.400-.4 1 .2 2 1.200 2.400 1.800-1.800 2.600-3 2.400-4 2.600 1.200 4.400 3.400 5.200 5.400 1.300 1 2.100 3 2 5.200l-6 1.400-7-4z" fill="#ffbd2e"/>
<circle cx="460.200" cy="522.900" r="3.600" fill="#6b3fd6"/>
<path d="M456.800 521.400c1.200-1.800 3.800-2.400 5.800-1.200-1.600-.2-2.800.4-3.400 1.400z" fill="#b14fe0"/>
<!-- whatsapp -->
<path d="M487.300 530.700l1.500-4.600a9 9 0 1 1 3.400 3.300z" stroke="#25d366" stroke-width="1.900" stroke-linejoin="round"/>
<path d="M492.600 517.600c-.5 1.700.5 3.900 2 5.400s3.500 2.600 5.300 2.200c.8-.4 1.100-1.100.9-1.600l-1.900-1.100-1.100.9c-1.300-.6-2.400-1.700-3-3l.9-1.100-1.100-1.900c-.7-.2-1.500.1-2 .2z" fill="#25d366"/>
<!-- tray -->
<path d="M815.800 524.400l4.400-4.400 4.400 4.400" stroke="#fff" stroke-width="1.200" stroke-linecap="round" stroke-linejoin="round"/>
<path d="M875.700 520.500a8.400 8.400 0 0 1 11.400 0M877.700 522.700a5.500 5.500 0 0 1 7.400 0M879.600 524.800a2.700 2.700 0 0 1 3.600 0" stroke="#fff" stroke-width="1.500" stroke-linecap="round"/>
<g stroke="#fff" stroke-width="1.100" stroke-linecap="round">
<path d="M894.400 520.300h2.200l3-2.600v8.800l-3-2.600h-2.200z" stroke-linejoin="round"/><path d="M902 520.200l3.600 3.600M905.600 520.200l-3.600 3.600"/>
<rect x="913.500" y="518.600" width="11.400" height="8" rx="2"/><path d="M926.400 521.300v2.600"/>
</g>
<circle cx="881.400" cy="526.300" r="0.900" fill="#fff"/>
<rect x="915" y="520.100" width="8.400" height="5" rx="1" fill="#fff"/>
<!-- bell -->
<path d="M997 526.200c1.200-1.200 1.600-2.400 1.600-4.800a4 4 0 0 1 8 0c0 2.400.4 3.600 1.600 4.800z" fill="#fff"/>
<path d="M1000.800 527.200a1.900 1.900 0 0 0 3.600 0z" fill="#fff"/>
<path d="M1002.400 520h2.600l-2.600 2.800h2.600M1005.600 516.600h2l-2 2h2" stroke="#3a1919" stroke-width="0.800" stroke-linecap="round" stroke-linejoin="round"/>
</svg>

</body>
</html>
